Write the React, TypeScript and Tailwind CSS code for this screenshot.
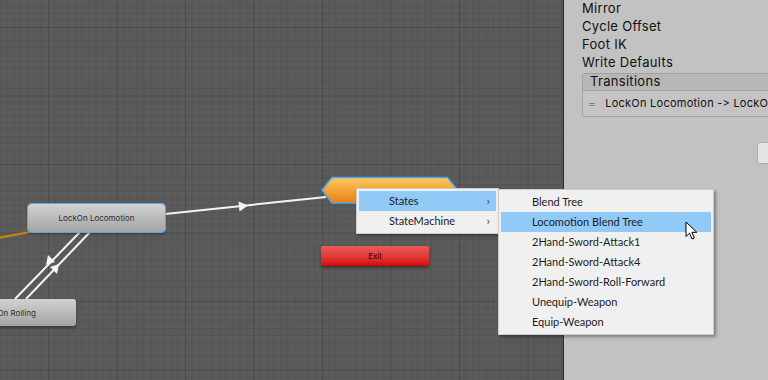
import React from 'react';

const GRID = 68.5;
const MINOR = GRID / 10;

function CanvasDrawing() {
  const minor = Array.from({ length: 9 }, (_, i) => (i + 1) * MINOR);
  return (
    <svg className="absolute inset-0" width="563" height="380">
      <defs>
        <pattern id="grid" x="-20.5" y="-41.5" width={GRID} height={GRID} patternUnits="userSpaceOnUse">
          {minor.map(p => (
            <g key={p}>
              <line x1={p} y1="0" x2={p} y2={GRID} stroke="#535353" strokeWidth="1" />
              <line x1="0" y1={p} x2={GRID} y2={p} stroke="#535353" strokeWidth="1" />
            </g>
          ))}
          <line x1="0" y1="0" x2="0" y2={GRID} stroke="#464646" strokeWidth="1.5" />
          <line x1="0" y1="0" x2={GRID} y2="0" stroke="#464646" strokeWidth="1.5" />
        </pattern>
        <linearGradient id="orange" x1="0" y1="0" x2="0" y2="1">
          <stop offset="0" stopColor="#fcc862" />
          <stop offset="1" stopColor="#ea800c" />
        </linearGradient>
      </defs>
      <rect width="563" height="380" fill="#5b5b5b" />
      <rect width="563" height="380" fill="url(#grid)" />

      {/* orange transition coming in from the left */}
      <line x1="-2" y1="238" x2="30" y2="232" stroke="#c7850f" strokeWidth="2" />

      {/* Locomotion -> default state */}
      <line x1="165" y1="214" x2="326" y2="197" stroke="#f4f4f4" strokeWidth="2" />
      <polygon points="248,205.5 238.5,201.5 239.5,211.5" fill="#f4f4f4" />

      {/* Locomotion <-> Rolling */}
      <line x1="80" y1="232" x2="15" y2="299" stroke="#f4f4f4" strokeWidth="2" />
      <line x1="90" y1="232" x2="26" y2="299" stroke="#f4f4f4" strokeWidth="2" />
      <polygon points="46,265 48,255 55,262" fill="#f4f4f4" />
      <polygon points="59,264 57,274 50,267" fill="#f4f4f4" />

      {/* default sub-state machine (hexagon) */}
      <polygon
        points="322,190 332,177.5 447.5,177.5 457.5,190 447.5,203 332,203"
        fill="url(#orange)"
        stroke="#4ea6ee"
        strokeWidth="1.5"
      />
    </svg>
  );
}

function StateNode({ label, className }: { label: string; className: string }) {
  return (
    <div
      className={`absolute flex items-center justify-center rounded-[3px] bg-gradient-to-b from-[#d2d2d2] to-[#a4a4a4] text-[8px] text-[#2e2e2e] shadow-[0_2px_3px_rgba(0,0,0,0.35)] ${className}`}
      style={{ fontFamily: 'Inter, "Noto Sans", sans-serif' }}
    >
      {label}
    </div>
  );
}

function Cursor() {
  return (
    <svg className="absolute left-[685px] top-[221px]" width="14" height="20" viewBox="0 0 14 20">
      <path
        d="M1 1 L1 15.5 L4.5 12.2 L7 18 L9.3 17 L6.9 11.3 L11.8 11.3 Z"
        fill="#ffffff"
        stroke="#000000"
        strokeWidth="1"
        strokeLinejoin="round"
      />
    </svg>
  );
}

const states = [
  'Blend Tree',
  'Locomotion Blend Tree',
  '2Hand-Sword-Attack1',
  '2Hand-Sword-Attack4',
  '2Hand-Sword-Roll-Forward',
  'Unequip-Weapon',
  'Equip-Weapon',
];

export default function App() {
  return (
    <div className="relative flex h-[380px] w-[768px] overflow-hidden bg-[#c2c2c2]">
      {/* Animator graph */}
      <div className="relative h-full w-[563px] shrink-0 overflow-hidden">
        <CanvasDrawing />
        <StateNode
          label="LockOn Locomotion"
          className="left-[28px] top-[204px] h-[28px] w-[137px] outline outline-[1.5px] outline-[#56a8ee]"
        />
        <StateNode label="LockOn Rolling" className="left-[-61px] top-[299px] h-[27px] w-[137px]" />
        <div
          className="absolute left-[321px] top-[246px] flex h-[20px] w-[108px] items-center justify-center rounded-[2px] bg-gradient-to-b from-[#ea5a5a] to-[#d20000] text-[8px] text-[#3a0000] shadow-[0_2px_3px_rgba(0,0,0,0.35)]"
          style={{ fontFamily: 'Inter, "Noto Sans", sans-serif' }}
        >
          Exit
        </div>
      </div>

      {/* Inspector */}
      <div
        className="flex-1 border-l border-[#2d2d2d] pl-[18px] text-[13px] tracking-[0.3px] text-[#111] [font-variant-ligatures:no-contextual]"
        style={{ fontFamily: 'Inter, "Noto Sans", sans-serif' }}
      >
        <div className="flex h-[18px] items-center">Mirror</div>
        <div className="flex h-[18px] items-center">Cycle Offset</div>
        <div className="flex h-[18px] items-center">Foot IK</div>
        <div className="flex h-[18px] items-center">Write Defaults</div>
        <div className="mt-[1px] w-[200px] overflow-hidden rounded-l-[3px] border border-r-0 border-[#a3a3a3]">
          <div className="flex h-[17px] items-center border-b border-[#a3a3a3] bg-[#b7b7b7] pl-[7px]">Transitions</div>
          <div className="flex h-[25px] items-center whitespace-nowrap bg-[#c4c4c4] pl-[5px] text-[11px] tracking-[0.25px]">
            <span className="mr-[9px] text-[12px] text-[#7c7c7c]">=</span>
            LockOn Locomotion -&gt; LockOn Rolling
          </div>
        </div>
        <div className="ml-[176px] mt-[26px] h-[20px] w-[20px] rounded-[2px] bg-[#e4e4e4] shadow-[0_0_0_1px_#b0b0b0]" />
      </div>

      {/* Context menu */}
      <div
        className="absolute left-[356px] top-[188px] w-[143px] border border-[#cccccc] bg-[#f0f0f0] p-[2px] text-[11px] text-[#1c1c1c] shadow-[2px_2px_3px_rgba(0,0,0,0.35)]"
        style={{ fontFamily: 'Lato, "Noto Sans", sans-serif' }}
      >
        <div className="flex h-[20px] items-center justify-between bg-[#91c9f7] pl-[30px] pr-[6px]">
          <span>States</span>
          <span className="text-[12px] text-[#444]">›</span>
        </div>
        <div className="flex h-[20px] items-center justify-between pl-[30px] pr-[6px]">
          <span>StateMachine</span>
          <span className="text-[12px] text-[#444]">›</span>
        </div>
      </div>

      {/* Submenu */}
      <div
        className="absolute left-[498px] top-[189px] w-[216px] border border-[#cccccc] bg-[#f0f0f0] p-[2px] text-[11px] text-[#1c1c1c] shadow-[2px_2px_3px_rgba(0,0,0,0.35)]"
        style={{ fontFamily: 'Lato, "Noto Sans", sans-serif' }}
      >
        {states.map((s, i) => (
          <div
            key={s}
            className={`flex h-[20px] items-center pl-[31px] ${i === 1 ? 'bg-[#91c9f7]' : ''}`}
          >
            {s}
          </div>
        ))}
      </div>

      <Cursor />
    </div>
  );
}
